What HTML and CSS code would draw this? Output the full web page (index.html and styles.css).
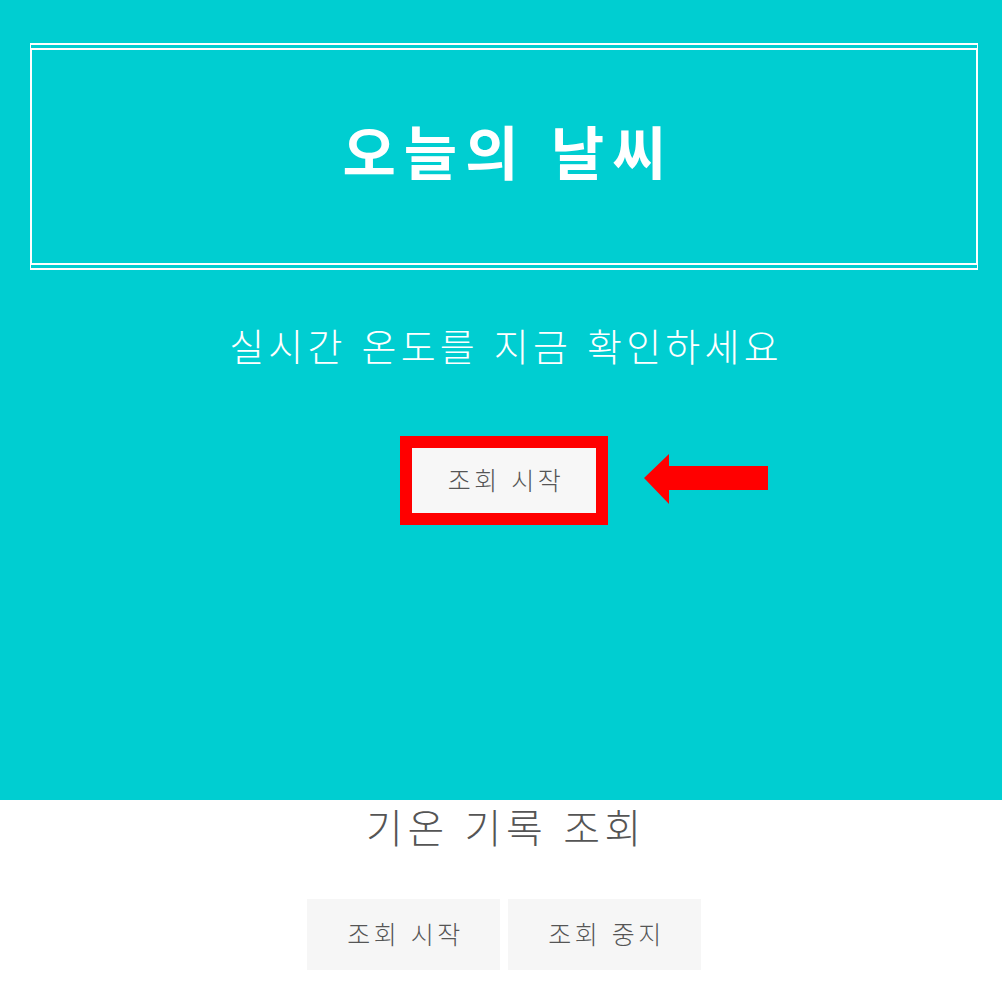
FILE: index.html
```html
<!DOCTYPE html>
<html lang="ko">
<head>
<meta charset="utf-8">
<title>오늘의 날씨</title>
<link rel="stylesheet" href="styles.css">
</head>
<body>
<section class="hero">
  <div class="title-box">
    <h1 class="title">오늘의 날씨</h1>
  </div>
  <p class="subtitle">실시간 온도를 지금 확인하세요</p>
  <div class="cta-row">
    <button class="btn btn-hero" type="button">조회 시작</button>
    <svg class="arrow" width="125" height="50" viewBox="0 0 125 50" aria-hidden="true">
      <polygon points="0,24 25,0 25,12 124,12 124,36 25,36 25,50" fill="#ff0000"/>
    </svg>
  </div>
</section>
<section class="history">
  <h2 class="history-title">기온 기록 조회</h2>
  <div class="btn-group">
    <button class="btn btn-plain" type="button">조회 시작</button>
    <button class="btn btn-plain" type="button">조회 중지</button>
  </div>
</section>
</body>
</html>
```

FILE: styles.css
```css
* { box-sizing: border-box; }
html, body { margin: 0; padding: 0; }
body {
  font-family: "Noto Sans CJK KR", "Noto Sans", sans-serif;
  background: #ffffff;
}
.hero {
  background: #00ced1;
  height: 800px;
  padding: 43px 24px 0 30px;
}
.title-box {
  height: 227px;
  border-left: 2px solid #fff;
  border-right: 2px solid #fff;
  border-top: 7px double #fff;
  border-bottom: 7px double #fff;
  display: flex;
  align-items: center;
  justify-content: center;
  padding-bottom: 14px;
}
.title {
  margin: 0;
  color: #fff;
  font-size: 58px;
  font-weight: 700;
  line-height: 1;
  letter-spacing: 8px;
  padding-left: 8px;
}
.subtitle {
  margin: 56px 0 0;
  text-align: center;
  color: #fff;
  font-size: 38px;
  font-weight: 300;
  line-height: 1;
  letter-spacing: 4.2px;
  padding-left: 4px;
}
.cta-row {
  margin-top: 72px;
  display: flex;
  justify-content: center;
  position: relative;
}
.btn {
  font-family: "Noto Sans CJK KR", "Noto Sans", sans-serif;
  font-size: 25px;
  font-weight: 300;
  color: #555;
  border: none;
  letter-spacing: 3.5px;
  padding: 0 0 4px 4px;
}
.btn-hero {
  width: 208px;
  height: 89px;
  background: #f7f7f7;
  border: 12px solid #ff0000;
}
.arrow {
  position: absolute;
  left: 614px;
  top: 18px;
}
.history {
  padding: 0 24px 0 30px;
  text-align: center;
}
.history-title {
  margin: 0;
  font-size: 40px;
  font-weight: 300;
  color: #555;
  line-height: 52px;
  letter-spacing: 4.6px;
  padding-left: 4px;
}
.btn-group {
  margin-top: 47px;
  display: flex;
  justify-content: center;
  gap: 8px;
}
.btn-plain {
  width: 193px;
  height: 71px;
  background: #f6f6f6;
}
```
